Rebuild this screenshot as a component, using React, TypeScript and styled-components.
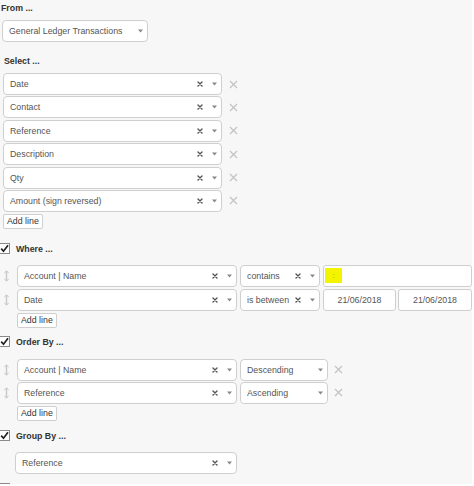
import React from "react";
import styled, { createGlobalStyle } from "styled-components";

const Global = createGlobalStyle`
  html, body { margin: 0; padding: 0; background: #ffffff; }
  body { font-family: "Liberation Sans", Arial, sans-serif; }
  * { box-sizing: border-box; }
`;

const Panel = styled.div`
  width: 472px;
  height: 484px;
  background: #f7f7f7;
  overflow: hidden;
  font-size: 8.8px;
  color: #555;
`;

const Label = styled.div<{ $mt: number; $ml: number }>`
  margin-top: ${(p) => p.$mt}px;
  margin-left: ${(p) => p.$ml}px;
  height: 16px;
  line-height: 16px;
  font-weight: bold;
  color: #333;
  display: flex;
  align-items: center;
  gap: 6px;
`;

const Box = styled.span`
  width: 11px;
  height: 11px;
  border: 1px solid #8a8a8a;
  background: #fff;
  display: inline-flex;
  align-items: center;
  justify-content: center;
  margin-left: -1px;
`;

const Rows = styled.div<{ $mt: number; $gap: number; $ml?: number }>`
  margin-top: ${(p) => p.$mt}px;
  margin-left: ${(p) => p.$ml ?? 0}px;
  display: flex;
  flex-direction: column;
  gap: ${(p) => p.$gap}px;
`;

const Row = styled.div`
  display: flex;
  align-items: center;
  height: 22px;
`;

const SelectBox = styled.div<{ $w: number; $ml?: number }>`
  width: ${(p) => p.$w}px;
  margin-left: ${(p) => p.$ml ?? 0}px;
  height: 22px;
  border: 1px solid #cfcfcf;
  border-radius: 4px;
  background: #fff;
  display: flex;
  align-items: center;
  padding-left: 6px;
  flex-shrink: 0;
`;

const Value = styled.span`
  flex: 1;
  white-space: nowrap;
  overflow: hidden;
  color: #555;
`;

const Slot = styled.span<{ $w: number }>`
  width: ${(p) => p.$w}px;
  display: inline-flex;
  align-items: center;
  justify-content: center;
  flex-shrink: 0;
`;

const Input = styled.div<{ $w: number; $ml?: number }>`
  width: ${(p) => p.$w}px;
  margin-left: ${(p) => p.$ml ?? 0}px;
  height: 22px;
  border: 1px solid #cfcfcf;
  border-radius: 3px;
  background: #fff;
  display: flex;
  align-items: center;
  justify-content: center;
  color: #555;
  flex-shrink: 0;
`;

const ValueInput = styled(Input)`
  justify-content: flex-start;
  padding-left: 1px;
`;

const Highlight = styled.span`
  width: 17px;
  height: 15px;
  background: #f4f400;
  color: #a09a20;
  display: inline-flex;
  align-items: center;
  justify-content: center;
  font-size: 8px;
`;

const Drag = styled.span`
  width: 17px;
  display: inline-flex;
  justify-content: center;
  padding-right: 5px;
  flex-shrink: 0;
`;

const AddButton = styled.button<{ $mt: number; $ml: number }>`
  margin-top: ${(p) => p.$mt}px;
  margin-left: ${(p) => p.$ml}px;
  height: 15px;
  padding: 0 3px;
  border: 1px solid #cfcfcf;
  border-radius: 2px;
  background: #fff;
  font-family: "Liberation Sans", Arial, sans-serif;
  font-size: 8.8px;
  color: #333;
  display: block;
  line-height: 13px;
`;

const Clear = () => (
  <svg width="6" height="6" viewBox="0 0 6 6">
    <path d="M1 1L5 5M5 1L1 5" stroke="#555" strokeWidth="1.4" strokeLinecap="round" />
  </svg>
);

const Caret = () => (
  <svg width="5" height="4" viewBox="0 0 5 4">
    <path d="M0 0.5H5L2.5 3.5Z" fill="#888" />
  </svg>
);

const Remove = () => (
  <svg width="9" height="9" viewBox="0 0 9 9">
    <path d="M1 1L8 8M8 1L1 8" stroke="#c4c4c4" strokeWidth="1.3" />
  </svg>
);

const DragIcon = () => (
  <svg width="5" height="12" viewBox="0 0 5 12">
    <path d="M2.5 1V11" stroke="#c8c8c8" strokeWidth="1.4" />
    <path d="M0.3 3.2L2.5 0.8L4.7 3.2M0.3 8.8L2.5 11.2L4.7 8.8" stroke="#c8c8c8" strokeWidth="1" fill="none" />
  </svg>
);

const Check = () => (
  <svg width="9" height="9" viewBox="0 0 9 9">
    <path d="M1.2 4.6L3.5 7.2L8 1.3" stroke="#222" strokeWidth="1.7" fill="none" />
  </svg>
);

type SelProps = { w: number; value: string; clear?: boolean; ml?: number };

const Select = ({ w, value, clear = true, ml }: SelProps) => (
  <SelectBox $w={w} $ml={ml}>
    <Value>{value}</Value>
    {clear && (
      <Slot $w={16}>
        <Clear />
      </Slot>
    )}
    <Slot $w={13}>
      <Caret />
    </Slot>
  </SelectBox>
);

const Header = ({ text, mt }: { text: string; mt: number }) => (
  <Label $mt={mt} $ml={0}>
    <Box>
      <Check />
    </Box>
    <span>{text}</span>
  </Label>
);

const selectFields = ["Date", "Contact", "Reference", "Description", "Qty", "Amount (sign reversed)"];

export default function App() {
  return (
    <>
      <Global />
      <Panel>
        <Label $mt={0} $ml={1}>From ...</Label>
        <Rows $mt={4} $gap={0} $ml={2}>
          <Select w={146} value="General Ledger Transactions" clear={false} />
        </Rows>

        <Label $mt={11} $ml={4}>Select ...</Label>
        <Rows $mt={4} $gap={1.4} $ml={3}>
          {selectFields.map((f) => (
            <Row key={f}>
              <Select w={219} value={f} />
              <Slot $w={22}>
                <Remove />
              </Slot>
            </Row>
          ))}
        </Rows>
        <AddButton $mt={2} $ml={3}>Add line</AddButton>

        <Header text="Where ..." mt={12} />
        <Rows $mt={8} $gap={2}>
          <Row>
            <Drag>
              <DragIcon />
            </Drag>
            <Select w={220} value="Account | Name" />
            <Select w={80} value="contains" ml={3} />
            <ValueInput $w={149} $ml={3}>
              <Highlight>:</Highlight>
            </ValueInput>
          </Row>
          <Row>
            <Drag>
              <DragIcon />
            </Drag>
            <Select w={220} value="Date" />
            <Select w={80} value="is between" ml={3} />
            <Input $w={73} $ml={3}>21/06/2018</Input>
            <Input $w={74} $ml={2}>21/06/2018</Input>
          </Row>
        </Rows>
        <AddButton $mt={2} $ml={17}>Add line</AddButton>

        <Header text="Order By ..." mt={6} />
        <Rows $mt={9} $gap={1}>
          <Row>
            <Drag>
              <DragIcon />
            </Drag>
            <Select w={220} value="Account | Name" />
            <Select w={88} value="Descending" clear={false} ml={3} />
            <Slot $w={20}>
              <Remove />
            </Slot>
          </Row>
          <Row>
            <Drag>
              <DragIcon />
            </Drag>
            <Select w={220} value="Reference" />
            <Select w={88} value="Ascending" clear={false} ml={3} />
            <Slot $w={20}>
              <Remove />
            </Slot>
          </Row>
        </Rows>
        <AddButton $mt={2} $ml={17}>Add line</AddButton>

        <Header text="Group By ..." mt={7} />
        <Rows $mt={8} $gap={0} $ml={15}>
          <Select w={222} value="Reference" />
        </Rows>

        <Header text="" mt={7} />
      </Panel>
    </>
  );
}
